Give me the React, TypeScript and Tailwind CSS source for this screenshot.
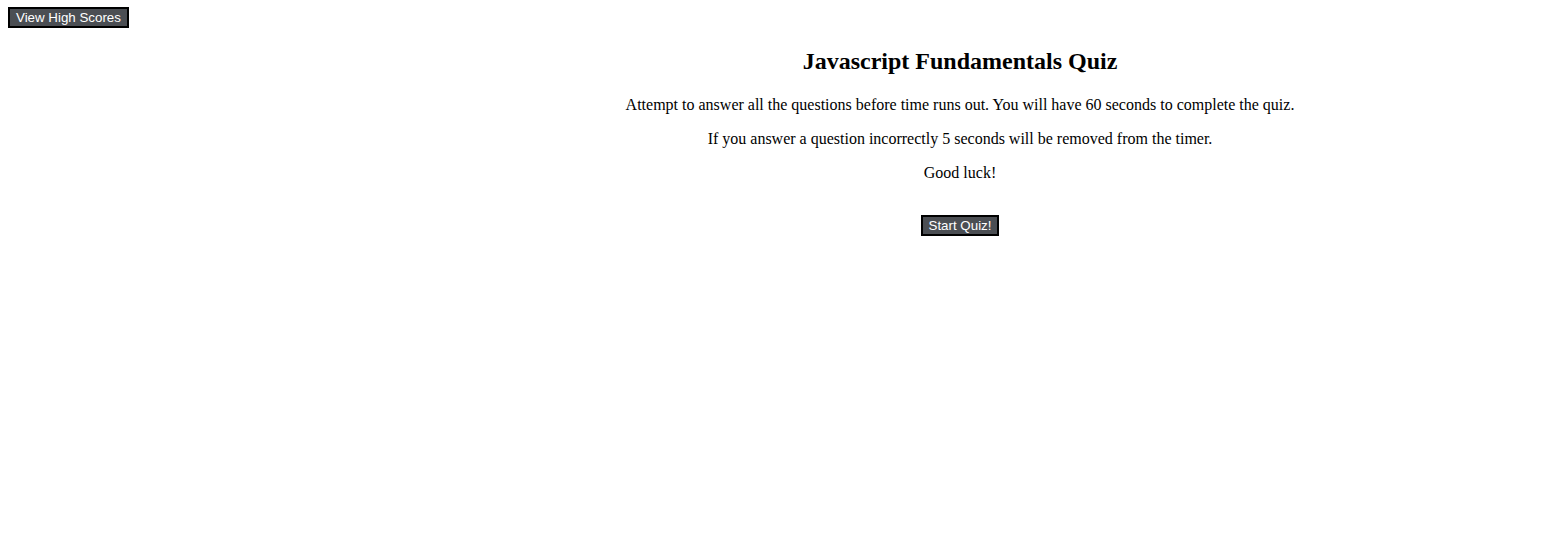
export default function App() {
  return (
    <div className="min-h-screen bg-white px-2 pt-[7px] font-['Liberation_Serif',serif] text-black">
      <button
        type="button"
        className="block h-[21px] border-2 border-black bg-[#4b4e53] px-[6px] font-['Liberation_Sans',Arial,sans-serif] text-[13.33px] leading-[15px] text-white"
      >
        View High Scores
      </button>
      <main className="ml-[366px] text-center">
        <h2 className="mt-[19px] text-[24px] font-bold leading-[28px]">Javascript Fundamentals Quiz</h2>
        <p className="mt-[21px] text-[16px] leading-[18px]">
          Attempt to answer all the questions before time runs out. You will have 60 seconds to complete the quiz.
        </p>
        <p className="mt-4 text-[16px] leading-[18px]">
          If you answer a question incorrectly 5 seconds will be removed from the timer.
        </p>
        <p className="mt-4 text-[16px] leading-[18px]">Good luck!</p>
        <button
          type="button"
          className="mt-[33px] h-[21px] border-2 border-black bg-[#4b4e53] px-[6px] font-['Liberation_Sans',Arial,sans-serif] text-[13.33px] leading-[15px] text-white"
        >
          Start Quiz!
        </button>
      </main>
    </div>
  );
}
